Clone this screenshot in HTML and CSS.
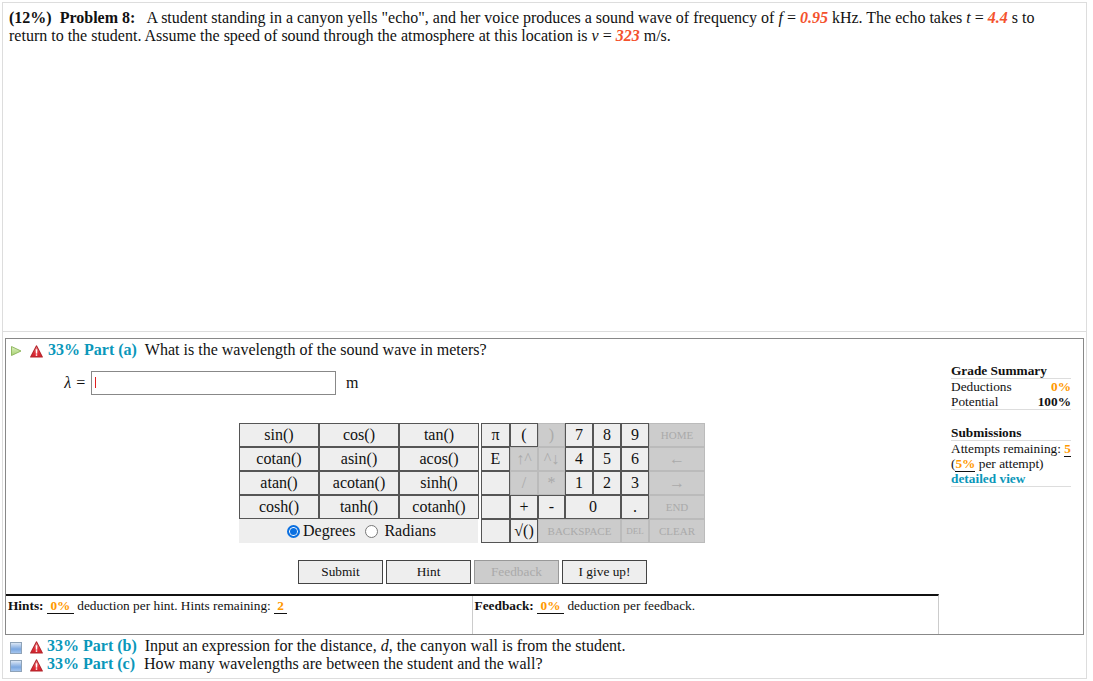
FILE: index.html
```html
<!DOCTYPE html>
<html lang="en">
<head>
  <meta charset="UTF-8" />
  <title>Problem 8</title>
  <link rel="stylesheet" href="styles.css">
</head>
<body>
  <svg class="defs" width="0" height="0">
    <defs>
      <linearGradient id="blue" x1="0" y1="0" x2="0" y2="1"><stop offset="0" stop-color="#e2ebf6"/><stop offset=".6" stop-color="#7ba7e0"/><stop offset="1" stop-color="#a9c8ef"/></linearGradient>
      <linearGradient id="red" x1="0" y1="0" x2="0" y2="1"><stop offset="0" stop-color="#f3a6a6"/><stop offset=".6" stop-color="#e2323c"/><stop offset="1" stop-color="#d01f2a"/></linearGradient>
      <linearGradient id="green" x1="0" y1="0" x2="0" y2="1"><stop offset="0" stop-color="#dcefc0"/><stop offset="1" stop-color="#a8d272"/></linearGradient>
    </defs>
  </svg>
  <div class="panel problem">
    <div class="line"><b>(12%)&nbsp; Problem 8:</b>&nbsp;&nbsp; A student standing in a canyon yells "echo", and her voice produces a sound wave of frequency of <i>f</i> = <span class="given">0.95</span> kHz. The echo takes <i>t</i> = <span class="given">4.4</span> s to</div>
    <div class="line">return to the student. Assume the speed of sound through the atmosphere at this location is <i>v</i> = <span class="given">323</span> m/s.</div>
  </div>
  <div class="panel parts">
    <div class="part-box">
      <div class="part-main">
        <div class="part-title">
          <svg class="icon" viewBox="0 0 12 12"><path d="M1.5 1.5 L11 6 L1.5 10.5 Z" fill="url(#green)" stroke="#93b964" stroke-linejoin="round"/></svg>
          <svg class="icon warn" viewBox="0 0 12 12"><path d="M6 .8 L11.4 11 H.6 Z" fill="url(#red)" stroke="#b3262d" stroke-linejoin="round"/><rect x="5.3" y="4" width="1.4" height="4" fill="#fff"/><rect x="5.3" y="8.6" width="1.4" height="1.4" fill="#fff"/></svg>
          <span class="part-label">33% Part (a)</span>
          <span class="part-q">What is the wavelength of the sound wave in meters?</span>
        </div>
        <div class="answer-row">
          <span class="lambda">λ =</span>
          <div class="answer-input"><span class="caret"></span></div>
          <span class="unit">m</span>
        </div>
        <div class="keypad">
          <div class="func-col">
            <div class="func-grid">
              <div class="key">sin()</div><div class="key">cos()</div><div class="key">tan()</div>
              <div class="key">cotan()</div><div class="key">asin()</div><div class="key">acos()</div>
              <div class="key">atan()</div><div class="key">acotan()</div><div class="key">sinh()</div>
              <div class="key">cosh()</div><div class="key">tanh()</div><div class="key">cotanh()</div>
            </div>
            <div class="angle-row">
              <span class="radio on"></span><span>Degrees</span>
              <span class="radio second"></span><span>Radians</span>
            </div>
          </div>
          <div class="num-grid">
            <div class="key">π</div><div class="key">(</div><div class="key off">)</div><div class="key">7</div><div class="key">8</div><div class="key">9</div><div class="key off small">HOME</div>
            <div class="key">E</div><div class="key off">↑^</div><div class="key off">^↓</div><div class="key">4</div><div class="key">5</div><div class="key">6</div><div class="key off">←</div>
            <div class="key"></div><div class="key off">/</div><div class="key off">*</div><div class="key">1</div><div class="key">2</div><div class="key">3</div><div class="key off">→</div>
            <div class="key"></div><div class="key">+</div><div class="key">-</div><div class="key span2">0</div><div class="key">.</div><div class="key off small">END</div>
            <div class="key"></div><div class="key">√()</div><div class="key off small span3">BACKSPACE</div><div class="key off tiny">DEL</div><div class="key off small">CLEAR</div>
          </div>
        </div>
        <div class="actions">
          <div class="btn">Submit</div>
          <div class="btn">Hint</div>
          <div class="btn off">Feedback</div>
          <div class="btn">I give up!</div>
        </div>
        <div class="hints">
          <div class="hint-cell"><b>Hints:</b> <span class="pct wide">0%</span> deduction per hint. Hints remaining: <span class="pct">2</span></div>
          <div class="hint-cell"><b>Feedback:</b> <span class="pct wide">0%</span> deduction per feedback.</div>
        </div>
      </div>
      <div class="summary">
        <div class="sum-head">Grade Summary</div>
        <div class="sum-row"><span>Deductions</span><b class="orange">0%</b></div>
        <div class="sum-row ruled"><span>Potential</span><b>100%</b></div>
        <div class="sum-head second">Submissions</div>
        <div class="sum-text">Attempts remaining: <span class="pct flush">5</span></div>
        <div class="sum-text">(<span class="pct flush">5%</span> per attempt)</div>
        <div class="sum-text ruled link">detailed view</div>
      </div>
    </div>
    <div class="part-title closed">
      <svg class="icon" viewBox="0 0 12 12"><rect x=".5" y=".5" width="11" height="11" fill="url(#blue)" stroke="#8fa3b8"/></svg>
      <svg class="icon warn" viewBox="0 0 12 12"><path d="M6 .8 L11.4 11 H.6 Z" fill="url(#red)" stroke="#b3262d" stroke-linejoin="round"/><rect x="5.3" y="4" width="1.4" height="4" fill="#fff"/><rect x="5.3" y="8.6" width="1.4" height="1.4" fill="#fff"/></svg>
      <span class="part-label">33% Part (b)</span>
      <span class="part-q">Input an expression for the distance, <i>d</i>, the canyon wall is from the student.</span>
    </div>
    <div class="part-title closed">
      <svg class="icon" viewBox="0 0 12 12"><rect x=".5" y=".5" width="11" height="11" fill="url(#blue)" stroke="#8fa3b8"/></svg>
      <svg class="icon warn" viewBox="0 0 12 12"><path d="M6 .8 L11.4 11 H.6 Z" fill="url(#red)" stroke="#b3262d" stroke-linejoin="round"/><rect x="5.3" y="4" width="1.4" height="4" fill="#fff"/><rect x="5.3" y="8.6" width="1.4" height="1.4" fill="#fff"/></svg>
      <span class="part-label">33% Part (c)</span>
      <span class="part-q c">How many wavelengths are between the student and the wall?</span>
    </div>
  </div>
</body>
</html>
```

FILE: styles.css
```css
body {
  margin: 0;
  padding: 2px 6px 0 2px;
  background: #fff;
  color: #111;
  font-family: "Liberation Serif", "Times New Roman", serif;
  font-size: 16px;
}
.defs {
  display: block;
  height: 0;
}
.panel {
  border: 1px solid #ddd;
}
.problem {
  height: 329px;
  padding: 6px 6px 0 6px;
  box-sizing: border-box;
  border-bottom: 0;
}
.line {
  height: 18px;
  line-height: 18px;
  white-space: nowrap;
}
.given {
  color: #f4522d;
  font-weight: bold;
  font-style: italic;
}
.parts {
  height: 348px;
  box-sizing: border-box;
  padding: 6px 2px 0 2px;
}
.part-box {
  display: flex;
  height: 297px;
  box-sizing: border-box;
  border: 1px solid #888;
}
.part-main {
  width: 933px;
  flex: none;
}
.part-title {
  display: flex;
  align-items: center;
  height: 20px;
  padding: 1px 0 0 4px;
}
.icon {
  width: 12px;
  height: 12px;
  margin-top: 2px;
  flex: none;
}
.warn {
  width: 13px;
  height: 13px;
  margin-left: 8px;
}
.part-label {
  margin-left: 5px;
  color: #0a97ba;
  font-weight: bold;
}
.part-q {
  margin-left: 8px;
}
.answer-row {
  display: flex;
  align-items: center;
  height: 24px;
  margin-top: 11px;
}
.lambda {
  width: 85px;
  padding-right: 5px;
  box-sizing: border-box;
  text-align: right;
  font-style: italic;
}
.answer-input {
  width: 245px;
  height: 24px;
  box-sizing: border-box;
  border: 1px solid #888;
  padding: 5px 0 0 3px;
}
.caret {
  display: block;
  width: 1px;
  height: 11px;
  background: #e02020;
}
.unit {
  margin-left: 10px;
}
.keypad {
  display: flex;
  gap: 3px;
  margin: 28px 0 0 233px;
}
.func-grid {
  display: grid;
  grid-template-columns: repeat(3, 80px);
  grid-auto-rows: 24px;
  width: 239px;
}
.num-grid {
  display: grid;
  grid-template-columns: 29px 28px 27px 28px 28px 28px 56px;
  grid-auto-rows: 24px;
}
.key {
  display: flex;
  align-items: center;
  justify-content: center;
  box-sizing: border-box;
  border: 1px solid #555;
  background: #eee;
}
.key.off {
  background: #ccc;
  color: #aaa;
  border-color: #bbb;
}
.key.small {
  font-size: 11px;
}
.key.tiny {
  font-size: 9px;
}
.span2 {
  grid-column: span 2;
}
.span3 {
  grid-column: span 3;
}
.angle-row {
  display: flex;
  align-items: center;
  justify-content: center;
  height: 24px;
  padding-left: 6px;
  box-sizing: border-box;
  background: #eee;
  gap: 3px;
}
.radio {
  width: 13px;
  height: 13px;
  box-sizing: border-box;
  border: 1px solid #777;
  border-radius: 50%;
  background: #fff;
}
.radio.on {
  border: 2px solid #0a6fe0;
  background: #0a6fe0;
  box-shadow: inset 0 0 0 1px #fff;
}
.radio.second {
  margin: 0 3px 0 7px;
}
.actions {
  display: flex;
  gap: 3px;
  margin: 17px 0 0 292px;
}
.btn {
  width: 85px;
  height: 24px;
  box-sizing: border-box;
  border: 1px solid #444;
  background: #eee;
  text-align: center;
  font-size: 13.33px;
  line-height: 22px;
}
.btn.off {
  background: #ccc;
  color: #aaa;
  border-color: #999;
}
.hints {
  display: flex;
  height: 40px;
  margin-top: 10px;
  border-top: 2px solid #111;
  border-right: 1px solid #ccc;
  box-sizing: border-box;
  font-size: 13.33px;
}
.hint-cell {
  flex: 1;
  padding: 2px 2px 0 2px;
}
.hint-cell + .hint-cell {
  border-left: 1px solid #ccc;
  padding-left: 2px;
}
.pct {
  display: inline-block;
  min-width: 11px;
  padding: 0 1px;
  text-align: center;
  color: #f90;
  font-weight: bold;
  border-bottom: 1px solid #111;
  line-height: 14px;
}
.pct.wide {
  width: 25px;
}
.pct.flush {
  min-width: 0;
  padding: 0;
}
.summary {
  width: 120px;
  margin: 24px 0 0 12px;
  font-size: 13.33px;
  line-height: 15px;
  white-space: nowrap;
}
.sum-head {
  font-weight: bold;
  border-bottom: 1px solid #ddd;
}
.sum-head.second {
  margin-top: 15px;
}
.sum-row {
  display: flex;
  justify-content: space-between;
}
.sum-text {
  height: 15px;
}
.ruled {
  border-bottom: 1px solid #ddd;
}
.orange {
  color: #f90;
}
.link {
  color: #0a97ba;
  font-weight: bold;
}
.closed {
  height: 18px;
  padding: 2px 0 0 5px;
}
.closed + .closed {
  padding-top: 0;
}
.closed .icon {
  margin-top: 3px;
}
.closed .part-label {
  margin-left: 4px;
}
.part-q.c {
  margin-left: 9px;
}
```
